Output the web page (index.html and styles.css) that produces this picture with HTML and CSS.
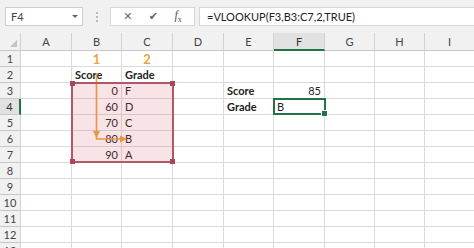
FILE: index.html
```html
<!DOCTYPE html>
<html lang="en">
<head>
  <meta charset="UTF-8" />
  <title>VLOOKUP</title>
  <link rel="stylesheet" href="styles.css">
</head>
<body>
  <div class="toolbar">
    <div class="namebox">
      <span>F4</span>
      <span class="caret"></span>
    </div>
    <div class="grip"><i></i><i></i><i></i></div>
    <div class="fxbox">
      <span class="ico">&#x2715;</span>
      <span class="ico">&#x2714;</span>
      <span class="ico fx"><i>f</i><sub>x</sub></span>
    </div>
    <div class="formula">=VLOOKUP(F3,B3:C7,2,TRUE)</div>
  </div>

  <div class="wrap">
    <div class="sheet" id="sheet"></div>
    <div class="sheet overlay">
      <div class="range"><b class="h tl"></b><b class="h tr"></b><b class="h bl"></b><b class="h br"></b></div>
      <div class="arrows">
        <svg width="101" height="80" viewBox="0 0 101 80">
          <path d="M24.5 6 V72 H50" fill="none" stroke="#efa33a" stroke-width="1.6"/>
          <path d="M21 64 L24.5 71 L28 64 Z" fill="#efa33a"/>
          <path d="M48 68.5 L55 72 L48 75.5 Z" fill="#efa33a"/>
        </svg>
      </div>
      <div class="active"><b class="h br"></b></div>
    </div>
  </div>

  <script>
    const cols = ['A', 'B', 'C', 'D', 'E', 'F', 'G', 'H', 'I'];
    const data = {
      B1: ['1', 'num-tag'], C1: ['2', 'num-tag'],
      B2: ['Score', 'bold'], C2: ['Grade', 'bold'],
      B3: ['0', 'right'], C3: ['F'],
      B4: ['60', 'right'], C4: ['D'],
      B5: ['70', 'right'], C5: ['C'],
      B6: ['80', 'right'], C6: ['B'],
      B7: ['90', 'right'], C7: ['A'],
      E3: ['Score', 'bold'], F3: ['85', 'right'],
      E4: ['Grade', 'bold'], F4: ['B']
    };
    const sheet = document.getElementById('sheet');

    function add(cls, text) {
      const d = document.createElement('div');
      d.className = cls;
      d.textContent = text || '';
      sheet.appendChild(d);
    }

    add('corner');
    cols.forEach(c => add(c === 'F' ? 'colhead sel' : 'colhead', c));
    for (let r = 1; r <= 13; r++) {
      add(r === 4 ? 'rowhead sel' : 'rowhead', r);
      cols.forEach(c => {
        const v = data[c + r];
        add(v && v[1] ? 'cell ' + v[1] : 'cell', v ? v[0] : '');
      });
    }
  </script>
</body>
</html>
```

FILE: styles.css
```css
body {
  margin: 0;
  width: 474px;
  height: 248px;
  overflow: hidden;
  background: #fff;
  font-family: Lato, "Liberation Sans", sans-serif;
  font-size: 11px;
  color: #222;
}
.toolbar {
  height: 33px;
  background: #f1f1f1;
  display: flex;
  align-items: center;
  padding: 0 0 0 5px;
  box-sizing: border-box;
}
.namebox {
  width: 78px;
  height: 19px;
  background: #fff;
  border: 1px solid #cfcfcf;
  box-sizing: border-box;
  display: flex;
  align-items: center;
  justify-content: space-between;
  padding: 0 4px 0 5px;
  color: #444;
}
.caret {
  border-left: 3px solid transparent;
  border-right: 3px solid transparent;
  border-top: 3px solid #666;
}
.grip {
  width: 27px;
  display: flex;
  flex-direction: column;
  align-items: center;
  gap: 2px;
}
.grip i {
  width: 2px;
  height: 2px;
  background: #b9b9b9;
}
.fxbox {
  width: 85px;
  height: 19px;
  background: #fff;
  border: 1px solid #d6d6d6;
  box-sizing: border-box;
  display: flex;
  align-items: center;
  justify-content: space-around;
  padding: 0 4px;
}
.ico {
  color: #666;
  font-family: "DejaVu Sans", sans-serif;
  font-size: 11px;
}
.fx {
  font-family: "Liberation Serif", serif;
  font-size: 12px;
  color: #555;
}
.fx sub {
  font-size: 8px;
}
.formula {
  flex: 1;
  height: 19px;
  margin-left: 4px;
  background: #fff;
  border: 1px solid #d6d6d6;
  border-right: none;
  box-sizing: border-box;
  display: flex;
  align-items: center;
  padding-left: 7px;
  color: #222;
}
.wrap {
  display: grid;
}
.sheet {
  grid-area: 1 / 1;
  display: grid;
  grid-template-columns: 21px 51px 50px 51px 51px 50px 51px 50px 50px 50px;
  grid-template-rows: 18px repeat(13, 16px);
}
.overlay {
  pointer-events: none;
}
.corner, .colhead, .rowhead {
  background: #f1f1f1;
  color: #444;
  border-right: 1px solid #d2d2d2;
  border-bottom: 1px solid #c8c8c8;
  box-sizing: border-box;
  display: flex;
  align-items: center;
  justify-content: center;
}
.corner {
  position: relative;
}
.corner::after {
  content: "";
  position: absolute;
  right: 3px;
  bottom: 3px;
  border-left: 7px solid transparent;
  border-bottom: 7px solid #c4c4c4;
}
.colhead.sel {
  background: #e1e1e1;
  border-bottom: 2px solid #217346;
  color: #333;
}
.rowhead.sel {
  background: #e1e1e1;
  border-right: 2px solid #217346;
  color: #333;
}
.cell {
  border-right: 1px solid #dadada;
  border-bottom: 1px solid #dadada;
  box-sizing: border-box;
  padding: 0 3px;
  line-height: 16px;
  white-space: nowrap;
}
.bold {
  font-weight: bold;
}
.right {
  text-align: right;
}
.num-tag {
  text-align: center;
  color: #efa33a;
  font-weight: bold;
  font-size: 13px;
}
.range {
  grid-column: 3 / 5;
  grid-row: 4 / 9;
  margin: -1px -1px 0 -1px;
  border: 2px solid #b4566a;
  background: rgba(214, 80, 100, 0.16);
  position: relative;
}
.arrows {
  grid-column: 3 / 5;
  grid-row: 3 / 8;
}
.arrows svg {
  display: block;
}
.active {
  grid-column: 7;
  grid-row: 5;
  margin: -1px -1px 0 -1px;
  border: 2px solid #217346;
  position: relative;
}
.h {
  position: absolute;
  width: 5px;
  height: 5px;
  background: #a8465b;
}
.tl { left: -3px; top: -3px; }
.tr { right: -3px; top: -3px; }
.bl { left: -3px; bottom: -3px; }
.br { right: -3px; bottom: -3px; }
.active .br {
  background: #217346;
  border: 1px solid #fff;
  right: -4px;
  bottom: -4px;
}
```
